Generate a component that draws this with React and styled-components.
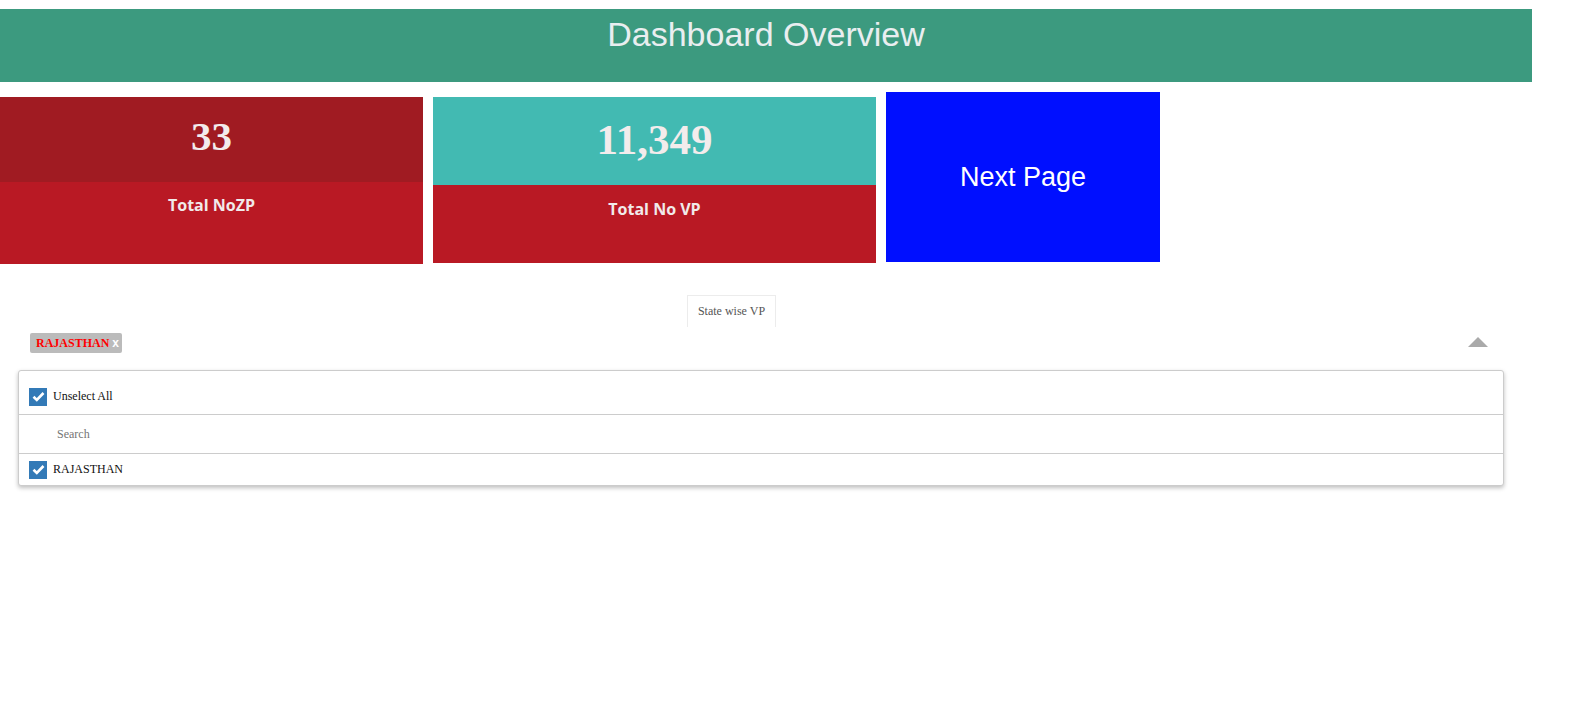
import React, { useState } from "react";
import styled, { createGlobalStyle } from "styled-components";

const GlobalStyle = createGlobalStyle`
  html, body {
    margin: 0;
    padding: 0;
    background: #ffffff;
    font-family: "Liberation Serif", "Times New Roman", serif;
    overflow: hidden;
  }
`;

const Page = styled.div`
  width: 100%;
  height: 700px;
  padding-top: 9px;
  box-sizing: border-box;
  overflow: hidden;
`;

const Header = styled.div`
  width: 1532px;
  height: 73px;
  background-color: #3c9a7f;
  display: flex;
  justify-content: center;
`;

const Title = styled.h1`
  margin: 0;
  padding-top: 5px;
  font-family: "Liberation Sans", Arial, sans-serif;
  font-weight: normal;
  font-size: 34px;
  line-height: 40px;
  color: #e9eef0;
`;

const CardRow = styled.div`
  display: flex;
  align-items: flex-start;
  gap: 10px;
  margin-top: 10px;
`;

const Card = styled.div`
  width: ${(p) => p.width}px;
  margin-top: 5px;
  display: flex;
  flex-direction: column;
`;

const CardTop = styled.div`
  height: ${(p) => p.height}px;
  background-color: ${(p) => p.color};
  display: flex;
  align-items: center;
  justify-content: center;
`;

const Value = styled.div`
  font-family: "Liberation Serif", "Times New Roman", serif;
  font-weight: bold;
  font-size: ${(p) => p.size}px;
  color: #f3ecec;
  line-height: 1;
  margin-top: ${(p) => p.offset}px;
`;

const CardBottom = styled.div`
  height: ${(p) => p.height}px;
  background-color: #b91924;
  display: flex;
  justify-content: center;
  padding-top: ${(p) => p.pad}px;
  box-sizing: border-box;
`;

const Label = styled.div`
  font-family: "Open Sans", "Noto Sans", sans-serif;
  font-weight: bold;
  font-size: 16px;
  line-height: 22px;
  color: #f1eaea;
`;

const NextButton = styled.button`
  width: 274px;
  height: 170px;
  background-color: #000fff;
  border: none;
  padding: 0;
  margin: 0;
  color: #ffffff;
  font-family: "Liberation Sans", Arial, sans-serif;
  font-size: 27px;
  cursor: pointer;
  display: flex;
  align-items: center;
  justify-content: center;
`;

const TabRow = styled.div`
  display: flex;
  padding-left: 687px;
  margin-top: 31px;
`;

const Tab = styled.div`
  width: 89px;
  height: 32px;
  box-sizing: border-box;
  border: 1px solid #ececec;
  border-bottom: none;
  display: flex;
  align-items: center;
  justify-content: center;
  font-size: 12px;
  color: #555;
`;

const SelectBar = styled.div`
  display: flex;
  align-items: center;
  justify-content: space-between;
  padding: 0 86px 0 30px;
  height: 30px;
  margin-top: 1px;
`;

const Chip = styled.div`
  display: flex;
  align-items: center;
  height: 20px;
  padding: 0 3px 0 6px;
  background-color: #bbbbbb;
  border-radius: 2px;
  font-size: 12px;
  font-weight: bold;
  color: #ff0000;
`;

const ChipClose = styled.span`
  color: #ffffff;
  margin-left: 3px;
  font-family: "Liberation Sans", Arial, sans-serif;
  font-size: 12px;
  font-weight: bold;
`;

const Caret = styled.div`
  width: 0;
  height: 0;
  border-left: 10px solid transparent;
  border-right: 10px solid transparent;
  border-bottom: 10px solid #aaaaaa;
  margin-top: -3px;
`;

const Panel = styled.div`
  width: 1486px;
  margin: 12px 0 0 18px;
  border: 1px solid #cccccc;
  border-radius: 3px;
  box-shadow: 0 2px 4px rgba(0, 0, 0, 0.25);
  background: #fff;
  box-sizing: border-box;
`;

const Option = styled.div`
  display: flex;
  align-items: center;
  gap: 6px;
  height: ${(p) => p.height}px;
  padding-left: 10px;
  padding-top: ${(p) => p.top || 0}px;
  font-size: 12px;
  color: #111;
  border-bottom: ${(p) => (p.divider ? "1px solid #cccccc" : "none")};
  box-sizing: border-box;
`;

const Box = styled.span`
  width: 18px;
  height: 18px;
  background-color: #337ab7;
  display: flex;
  align-items: center;
  justify-content: center;
`;

const SearchInput = styled.input`
  border: none;
  outline: none;
  margin-left: 26px;
  font-family: "Liberation Serif", "Times New Roman", serif;
  font-size: 12px;
  color: #333;
  width: 300px;
  ::placeholder {
    color: #777;
  }
`;

const Check = () => (
  <Box>
    <svg width="13" height="11" viewBox="0 0 13 11">
      <path d="M1.5 5.8 L4.8 9 L11.5 2" stroke="#fff" strokeWidth="2.6" fill="none" />
    </svg>
  </Box>
);

export default function App() {
  const [search, setSearch] = useState("");

  return (
    <Page>
      <GlobalStyle />
      <Header>
        <Title>Dashboard Overview</Title>
      </Header>
      <CardRow>
        <Card width={423}>
          <CardTop height={85} color="#a01b22">
            <Value size={41} offset={-6}>33</Value>
          </CardTop>
          <CardBottom height={82} pad={12}>
            <Label>Total NoZP</Label>
          </CardBottom>
        </Card>
        <Card width={443}>
          <CardTop height={88} color="#42bab2">
            <Value size={43} offset={-4}>11,349</Value>
          </CardTop>
          <CardBottom height={78} pad={13}>
            <Label>Total No VP</Label>
          </CardBottom>
        </Card>
        <NextButton>Next Page</NextButton>
      </CardRow>
      <TabRow>
        <Tab>State wise VP</Tab>
      </TabRow>
      <SelectBar>
        <Chip>
          RAJASTHAN<ChipClose>x</ChipClose>
        </Chip>
        <Caret />
      </SelectBar>
      <Panel>
        <Option height={44} top={8} divider>
          <Check />
          Unselect All
        </Option>
        <Option height={39} divider>
          <SearchInput
            placeholder="Search"
            value={search}
            onChange={(e) => setSearch(e.target.value)}
          />
        </Option>
        <Option height={31}>
          <Check />
          RAJASTHAN
        </Option>
      </Panel>
    </Page>
  );
}
